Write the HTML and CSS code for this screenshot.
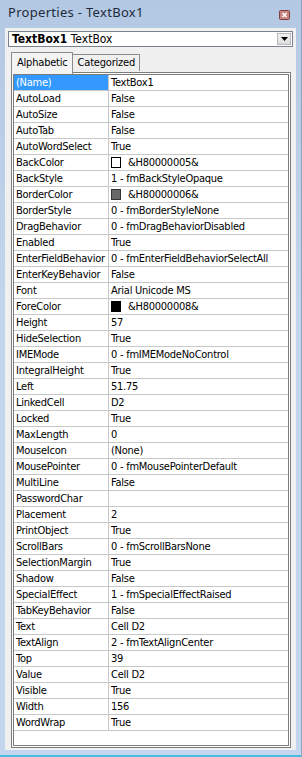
FILE: index.html
```html
<!DOCTYPE html>
<html>
<head>
<meta charset="utf-8">
<link rel="stylesheet" href="styles.css">
</head>
<body>
<div class="window">
  <div class="titlebar">
    <span class="title">Properties - TextBox1</span>
    <span class="close"><svg width="11" height="10" viewBox="0 0 11 10"><rect x="0.5" y="0.5" width="10" height="9" rx="1" fill="#c8837f" stroke="#7f3f3f"/><path d="M3.5 3 L7.5 7 M7.5 3 L3.5 7" stroke="#fff" stroke-width="1.6"/></svg></span>
  </div>
  <div class="panel">
    <div class="combo">
      <span class="combo-text"><b>TextBox1</b> TextBox</span>
      <span class="combo-btn"><svg width="7" height="4" viewBox="0 0 7 4"><path d="M0 0 H7 L3.5 4 Z" fill="#000"/></svg></span>
    </div>
    <div class="tabs">
      <span class="tab active">Alphabetic</span>
      <span class="tab">Categorized</span>
    </div>
    <div class="grid">
      <div class="row sel"><span class="name">(Name)</span><span class="val">TextBox1</span></div>
      <div class="row"><span class="name">AutoLoad</span><span class="val">False</span></div>
      <div class="row"><span class="name">AutoSize</span><span class="val">False</span></div>
      <div class="row"><span class="name">AutoTab</span><span class="val">False</span></div>
      <div class="row"><span class="name">AutoWordSelect</span><span class="val">True</span></div>
      <div class="row"><span class="name">BackColor</span><span class="val"><i class="sw sw-white"></i>&amp;H80000005&amp;</span></div>
      <div class="row"><span class="name">BackStyle</span><span class="val">1 - fmBackStyleOpaque</span></div>
      <div class="row"><span class="name">BorderColor</span><span class="val"><i class="sw sw-gray"></i>&amp;H80000006&amp;</span></div>
      <div class="row"><span class="name">BorderStyle</span><span class="val">0 - fmBorderStyleNone</span></div>
      <div class="row"><span class="name">DragBehavior</span><span class="val">0 - fmDragBehaviorDisabled</span></div>
      <div class="row"><span class="name">Enabled</span><span class="val">True</span></div>
      <div class="row"><span class="name">EnterFieldBehavior</span><span class="val">0 - fmEnterFieldBehaviorSelectAll</span></div>
      <div class="row"><span class="name">EnterKeyBehavior</span><span class="val">False</span></div>
      <div class="row"><span class="name">Font</span><span class="val">Arial Unicode MS</span></div>
      <div class="row"><span class="name">ForeColor</span><span class="val"><i class="sw sw-black"></i>&amp;H80000008&amp;</span></div>
      <div class="row"><span class="name">Height</span><span class="val">57</span></div>
      <div class="row"><span class="name">HideSelection</span><span class="val">True</span></div>
      <div class="row"><span class="name">IMEMode</span><span class="val">0 - fmIMEModeNoControl</span></div>
      <div class="row"><span class="name">IntegralHeight</span><span class="val">True</span></div>
      <div class="row"><span class="name">Left</span><span class="val">51.75</span></div>
      <div class="row"><span class="name">LinkedCell</span><span class="val">D2</span></div>
      <div class="row"><span class="name">Locked</span><span class="val">True</span></div>
      <div class="row"><span class="name">MaxLength</span><span class="val">0</span></div>
      <div class="row"><span class="name">MouseIcon</span><span class="val">(None)</span></div>
      <div class="row"><span class="name">MousePointer</span><span class="val">0 - fmMousePointerDefault</span></div>
      <div class="row"><span class="name">MultiLine</span><span class="val">False</span></div>
      <div class="row"><span class="name">PasswordChar</span><span class="val"></span></div>
      <div class="row"><span class="name">Placement</span><span class="val">2</span></div>
      <div class="row"><span class="name">PrintObject</span><span class="val">True</span></div>
      <div class="row"><span class="name">ScrollBars</span><span class="val">0 - fmScrollBarsNone</span></div>
      <div class="row"><span class="name">SelectionMargin</span><span class="val">True</span></div>
      <div class="row"><span class="name">Shadow</span><span class="val">False</span></div>
      <div class="row"><span class="name">SpecialEffect</span><span class="val">1 - fmSpecialEffectRaised</span></div>
      <div class="row"><span class="name">TabKeyBehavior</span><span class="val">False</span></div>
      <div class="row"><span class="name">Text</span><span class="val">Cell D2</span></div>
      <div class="row"><span class="name">TextAlign</span><span class="val">2 - fmTextAlignCenter</span></div>
      <div class="row"><span class="name">Top</span><span class="val">39</span></div>
      <div class="row"><span class="name">Value</span><span class="val">Cell D2</span></div>
      <div class="row"><span class="name">Visible</span><span class="val">True</span></div>
      <div class="row"><span class="name">Width</span><span class="val">156</span></div>
      <div class="row"><span class="name">WordWrap</span><span class="val">True</span></div>
    </div>
  </div>
</div>
</body>
</html>
```
FILE: styles.css
```css
* { box-sizing: border-box; }
html, body { margin: 0; padding: 0; }
body {
  width: 302px;
  height: 757px;
  overflow: hidden;
  font-family: "DejaVu Sans Condensed", "DejaVu Sans", sans-serif;
  font-size: 11px;
  color: #000;
}
.window {
  width: 302px;
  height: 757px;
  display: flex;
  flex-direction: column;
  background: linear-gradient(180deg, #b3c8e3 0%, #c3d5ec 40%, #c4d6ed 100%);
  border-bottom: 2px solid #49bde0;
  border-right: 1px solid #8fa6c2;
}
.titlebar {
  height: 28px;
  flex: none;
  display: flex;
  align-items: flex-start;
  justify-content: space-between;
  padding: 4px 11px 0 8px;
}
.title {
  font-family: "Noto Sans", "Open Sans", sans-serif;
  font-size: 13px;
  line-height: 17px;
  letter-spacing: 0.3px;
  color: #1e2a3a;
}
.close { margin-top: 6px; display: block; height: 10px; }
.close svg { display: block; }
.panel {
  flex: 1;
  margin: 0 5px 5px 5px;
  background: #f0f0f0;
  padding: 3px 3px 0 3px;
  display: flex;
  flex-direction: column;
}
.combo {
  height: 16px;
  flex: none;
  background: #fff;
  border: 1px solid #7a8290;
  display: flex;
  align-items: center;
  justify-content: space-between;
  padding: 0 1px 0 3px;
}
.combo-text { font-size: 12px; line-height: 14px; }
.combo-text b { font-weight: bold; }
.combo-btn {
  width: 14px;
  height: 12px;
  background: linear-gradient(#f4f4f4, #dcdcdc);
  border: 1px solid #b8b8b8;
  display: flex;
  align-items: center;
  justify-content: center;
}
.combo-btn svg { display: block; }
.tabs {
  flex: none;
  height: 22px;
  margin-top: 3px;
  padding-left: 3px;
  display: flex;
  align-items: flex-end;
  position: relative;
  z-index: 1;
}
.tab {
  height: 17px;
  padding: 0 4px 0 5px;
  line-height: 16px;
  background: #f0f0f0;
  border: 1px solid #8c8c8c;
  border-bottom: none;
  font-size: 11px;
  letter-spacing: -0.2px;
  margin-bottom: 1px;
}
.tab.active {
  height: 22px;
  padding: 2px 4px 0 5px;
  line-height: 16px;
  margin-bottom: -2px;
  background: #f4f4f4;
}
.tab + .tab { border-left: none; }
.tab.active + .tab { border-left: 1px solid #8c8c8c; margin-left: -1px; }
.grid {
  flex: 1;
  margin: 0 2px 2px 3px;
  border: 3px double #7c7c7c;
  background: #fff;
  overflow: hidden;
  letter-spacing: -0.25px;
}
.row {
  display: flex;
  height: 16px;
  border-bottom: 1px solid #c8c8c8;
  line-height: 15px;
}
.name {
  width: 95px;
  flex: none;
  padding-left: 2px;
  border-right: 1px solid #c8c8c8;
  white-space: nowrap;
  overflow: hidden;
}
.val {
  flex: 1;
  padding-left: 2px;
  white-space: nowrap;
  overflow: hidden;
  display: flex;
  align-items: center;
}
.row.sel .name { background: #3399ff; color: #fff; }
.sw {
  display: inline-block;
  width: 10px;
  height: 11px;
  border: 1px solid #000;
  margin-right: 7px;
}
.sw-white { background: #fff; }
.sw-gray { background: #696969; border-color: #333; }
.sw-black { background: #000; }
```
